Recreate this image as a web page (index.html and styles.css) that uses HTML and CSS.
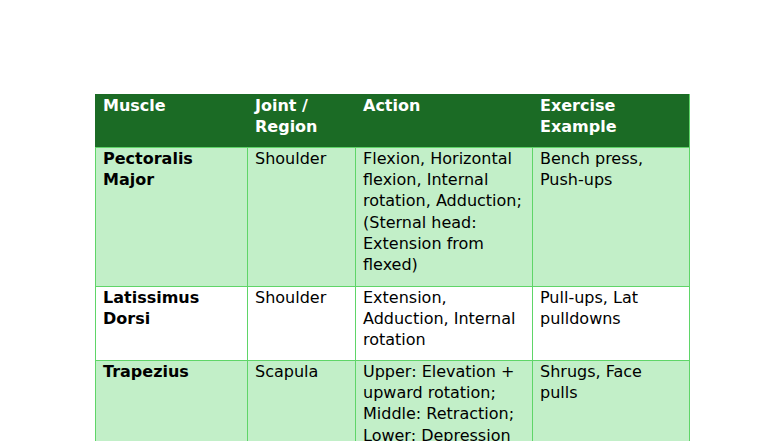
FILE: index.html
```html
<!DOCTYPE html>
<html>
<head>
<meta charset="utf-8">
<link rel="stylesheet" href="styles.css">
</head>
<body>
<div class="page">
<table class="muscles">
  <colgroup>
    <col class="c1"><col class="c2"><col class="c3"><col class="c4">
  </colgroup>
  <thead>
    <tr><th>Muscle</th><th>Joint / Region</th><th>Action</th><th>Exercise Example</th></tr>
  </thead>
  <tbody>
    <tr class="shade">
      <td class="name">Pectoralis Major</td>
      <td>Shoulder</td>
      <td>Flexion, Horizontal flexion, Internal rotation, Adduction; (Sternal head: Extension from flexed)</td>
      <td>Bench press, Push-ups</td>
    </tr>
    <tr class="plain">
      <td class="name">Latissimus Dorsi</td>
      <td>Shoulder</td>
      <td>Extension, Adduction, Internal rotation</td>
      <td>Pull-ups, Lat pulldowns</td>
    </tr>
    <tr class="shade">
      <td class="name">Trapezius</td>
      <td>Scapula</td>
      <td>Upper: Elevation + upward rotation; Middle: Retraction; Lower: Depression</td>
      <td>Shrugs, Face pulls</td>
    </tr>
  </tbody>
</table>
</div>
</body>
</html>
```

FILE: styles.css
```css
html, body {
  margin: 0;
  padding: 0;
  background: #ffffff;
}
body {
  font-family: "DejaVu Sans", Verdana, sans-serif;
  font-size: 16px;
  line-height: 21.33px;
  color: #000000;
  height: 441px;
  overflow: hidden;
}
.page {
  padding: 94px 0 0 95px;
}
.muscles {
  border-collapse: collapse;
  table-layout: fixed;
  width: 594px;
}
.c1 { width: 152px; }
.c2 { width: 108px; }
.c3 { width: 177px; }
.c4 { width: 157px; }
.muscles th,
.muscles td {
  border: 1px solid #5fd568;
  padding: 0 7px 10px 7px;
  vertical-align: top;
  text-align: left;
}
.muscles th {
  background: #1b6b25;
  color: #ffffff;
  font-weight: bold;
  border-color: #1b6b25;
  border-bottom-color: #5fd568;
  padding-bottom: 9px;
}
.muscles th:last-child {
  border-right-color: #5fd568;
}
.muscles td.name {
  font-weight: bold;
}
.plain td {
  padding-bottom: 9px;
}
.shade td {
  background: #c2efc8;
}
```
